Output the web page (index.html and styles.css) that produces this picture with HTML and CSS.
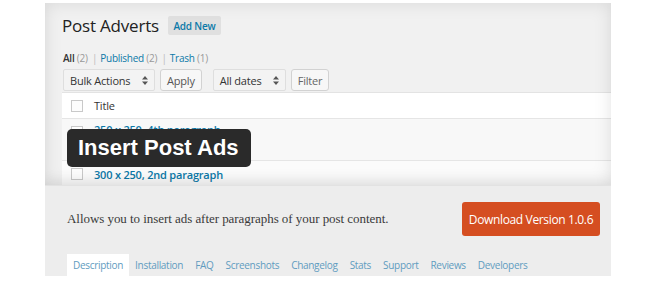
FILE: index.html
```html
<!DOCTYPE html>
<html>
<head>
<meta charset="utf-8">
<link rel="stylesheet" href="styles.css">
</head>
<body>
<div class="frame">
  <div class="shot">
    <div class="wrap">
      <h1 class="page-title"><span>Post Adverts</span><a class="add-new">Add New</a></h1>
      <ul class="subsubsub">
        <li><b>All</b> <span class="count">(2)</span> <span class="sep">|</span></li>
        <li><a>Published</a> <span class="count">(2)</span> <span class="sep">|</span></li>
        <li><a>Trash</a> <span class="count">(1)</span></li>
      </ul>
      <div class="tablenav">
        <div class="select sel-bulk"><span>Bulk Actions</span><svg class="arr" width="6" height="9" viewBox="0 0 6 9"><path d="M3 0L6 3.5H0z M3 9L0 5.5H6z" fill="#555"/></svg></div>
        <div class="btn">Apply</div>
        <div class="select sel-dates"><span>All dates</span><svg class="arr" width="6" height="9" viewBox="0 0 6 9"><path d="M3 0L6 3.5H0z M3 9L0 5.5H6z" fill="#555"/></svg></div>
        <div class="btn">Filter</div>
      </div>
    </div>
    <div class="list">
      <div class="row head"><span class="cb"></span><span class="col">Title</span></div>
      <div class="row r1"><span class="cb"></span><a class="col link">250 x 250, 4th paragraph</a></div>
      <div class="row r2"><span class="cb"></span><a class="col link">300 x 250, 2nd paragraph</a></div>
    </div>
    <div class="overlay">Insert Post Ads</div>
  </div>
  <div class="plugin">
    <div class="plugin-head">
      <p class="desc">Allows you to insert ads after paragraphs of your post content.</p>
      <a class="download">Download Version 1.0.6</a>
    </div>
    <nav class="tabs">
      <a class="tab active">Description</a>
      <a class="tab">Installation</a>
      <a class="tab">FAQ</a>
      <a class="tab">Screenshots</a>
      <a class="tab">Changelog</a>
      <a class="tab">Stats</a>
      <a class="tab">Support</a>
      <a class="tab">Reviews</a>
      <a class="tab">Developers</a>
    </nav>
  </div>
</div>
</body>
</html>
```

FILE: styles.css
```css
* { box-sizing: border-box; }
html, body { margin: 0; padding: 0; background: #fff; }
body { font-family: "Open Sans", "Liberation Sans", sans-serif; }

.frame {
  margin: 3px 0 0 45px;
  width: 566px;
}

.shot {
  position: relative;
  height: 182px;
  background: #f1f1f1;
  overflow: hidden;
}
.shot::after {
  content: "";
  position: absolute;
  inset: 0;
  box-shadow: inset 0 0 18px rgba(0,0,0,0.10), inset 0 -10px 14px -6px rgba(0,0,0,0.06);
  pointer-events: none;
}

.wrap { padding: 13px 0 0 17px; }

.page-title {
  margin: 0;
  height: 19px;
  display: flex;
  align-items: center;
  gap: 9px;
  font-size: 17px;
  font-weight: 400;
  color: #222;
  letter-spacing: -0.2px;
}
.add-new {
  display: inline-flex;
  align-items: center;
  justify-content: center;
  width: 53px;
  height: 19px;
  background: #e0e0e0;
  color: #0c79a8;
  font-size: 10px;
  font-weight: 600;
  letter-spacing: -0.2px;
  border-radius: 2px;
}

.subsubsub {
  list-style: none;
  margin: 16px 0 0 1px;
  padding: 0;
  display: flex;
  gap: 3px;
  font-size: 10px;
  line-height: 14px;
  color: #999;
  letter-spacing: -0.25px;
}
.subsubsub b { color: #333; font-weight: 600; }
.subsubsub a { color: #0c79a8; }
.subsubsub .sep { color: #bbb; margin-left: 2px; }

.tablenav {
  margin: 4px 0 0 1px;
  display: flex;
  align-items: center;
  height: 22px;
  font-size: 11px;
  letter-spacing: -0.2px;
}
.select {
  height: 22px;
  display: flex;
  align-items: center;
  justify-content: space-between;
  padding: 0 6px 0 6px;
  background: #f3f3f3;
  border: 1px solid #dedede;
  border-radius: 2px;
  color: #333;
}
.sel-bulk { width: 92px; }
.sel-dates { width: 73px; margin-left: 11px; }
.arr { flex: none; }
.btn {
  height: 22px;
  display: flex;
  align-items: center;
  justify-content: center;
  padding: 0 6px;
  margin-left: 5px;
  background: #f7f7f7;
  border: 1px solid #d2d2d2;
  border-radius: 3px;
  color: #555;
}
.btn:last-child { color: #666; }

.list {
  margin: 1px 0 0 17px;
  border-top: 1px solid #e3e3e3;
}
.row {
  display: flex;
  align-items: flex-start;
  border-bottom: 1px solid #e5e5e5;
}
.row.head {
  height: 26px;
  align-items: center;
  background: #fff;
}
.row.r1 { height: 42px; background: #f8f8f8; padding-top: 4px; }
.row.r2 { height: 30px; background: #fbfbfb; padding-top: 7px; border-bottom: none; }
.row.r1 .cb { margin-top: 3px; }
.cb {
  width: 12px;
  height: 12px;
  margin: 0 11px 0 9px;
  border: 1px solid #c9c9c9;
  background: #fdfdfd;
  flex: none;
}
.col { font-size: 11px; color: #333; letter-spacing: -0.2px; line-height: 14px; }
.row.head .col { color: #333; }
.link { color: #0c79a8; font-weight: 600; font-size: 11px; }

.overlay {
  position: absolute;
  left: 22px;
  top: 126px;
  width: 184px;
  height: 38px;
  border-radius: 5px;
  background: #2a2a2a;
  color: #fff;
  font-family: "Liberation Sans", Arial, sans-serif;
  font-weight: 700;
  font-size: 22px;
  line-height: 38px;
  padding-left: 11px;
  z-index: 2;
}

.plugin {
  height: 91px;
  background: #ededed;
  border-top: 1px solid #e2e2e2;
  display: flex;
  flex-direction: column;
}
.plugin-head {
  display: flex;
  align-items: center;
  justify-content: space-between;
  padding: 16px 11px 0 22px;
}
.desc {
  margin: 0;
  font-family: "Liberation Serif", "DejaVu Serif", serif;
  font-size: 13px;
  color: #3a3a3a;
  letter-spacing: -0.05px;
}
.download {
  display: flex;
  align-items: center;
  justify-content: center;
  width: 138px;
  height: 34px;
  background: #d54e21;
  color: #fff;
  border-radius: 3px;
  font-size: 12px;
  letter-spacing: -0.35px;
}
.tabs {
  margin-top: 18px;
  padding-left: 22px;
  display: flex;
  height: 22px;
  align-items: stretch;
}
.tab {
  display: flex;
  align-items: center;
  padding: 0 6px;
  font-size: 10px;
  color: #5f9cc0;
  letter-spacing: -0.3px;
}
.tab.active { background: #fff; }
```
